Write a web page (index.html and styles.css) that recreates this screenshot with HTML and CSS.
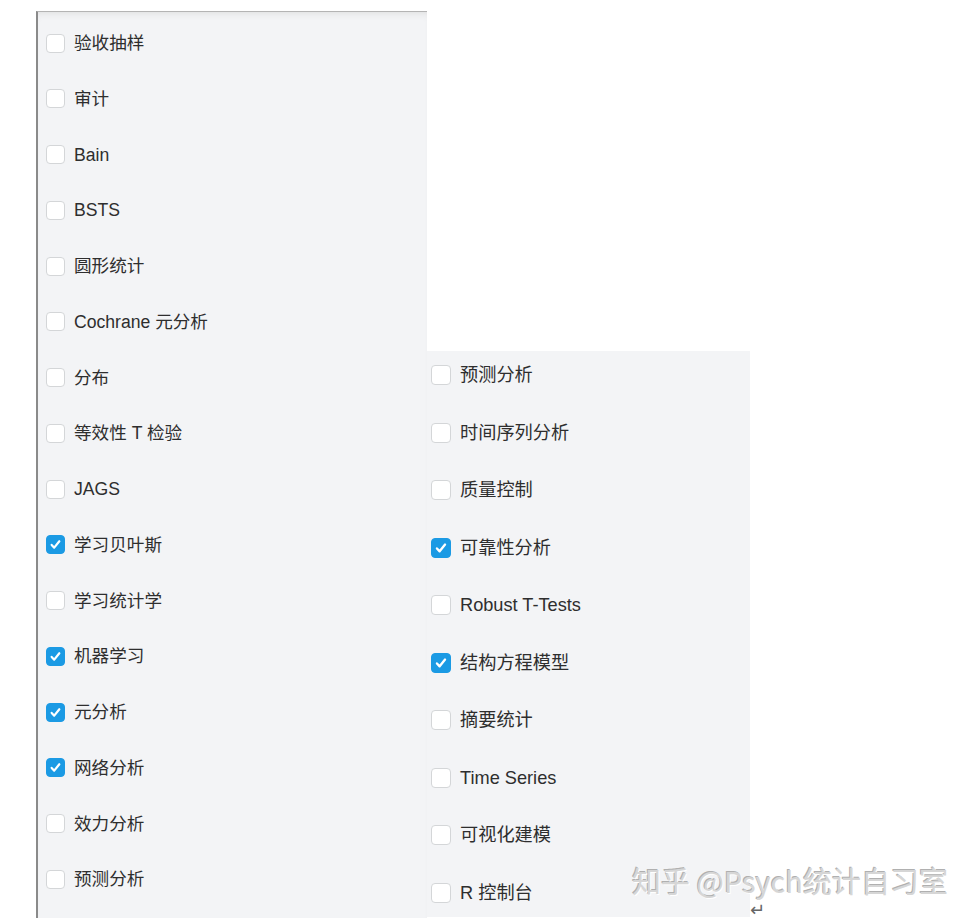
FILE: index.html
```html
<!DOCTYPE html>
<html lang="zh-CN">
<head>
  <meta charset="UTF-8">
  <title>模块列表</title>
  <link rel="stylesheet" href="styles.css">
</head>
<body>

<div class="page">

  <div class="panel panel-left">
    <label class="item"><span class="box"></span>验收抽样</label>
    <label class="item"><span class="box"></span>审计</label>
    <label class="item"><span class="box"></span>Bain</label>
    <label class="item"><span class="box"></span>BSTS</label>
    <label class="item"><span class="box"></span>圆形统计</label>
    <label class="item"><span class="box"></span>Cochrane 元分析</label>
    <label class="item"><span class="box"></span>分布</label>
    <label class="item"><span class="box"></span>等效性 T 检验</label>
    <label class="item"><span class="box"></span>JAGS</label>
    <label class="item"><span class="box checked"><svg viewBox="0 0 20 20"><path d="M5.5 10.5l3 3.2 6-7.5"/></svg></span>学习贝叶斯</label>
    <label class="item"><span class="box"></span>学习统计学</label>
    <label class="item"><span class="box checked"><svg viewBox="0 0 20 20"><path d="M5.5 10.5l3 3.2 6-7.5"/></svg></span>机器学习</label>
    <label class="item"><span class="box checked"><svg viewBox="0 0 20 20"><path d="M5.5 10.5l3 3.2 6-7.5"/></svg></span>元分析</label>
    <label class="item"><span class="box checked"><svg viewBox="0 0 20 20"><path d="M5.5 10.5l3 3.2 6-7.5"/></svg></span>网络分析</label>
    <label class="item"><span class="box"></span>效力分析</label>
    <label class="item"><span class="box"></span>预测分析</label>
  </div>

  <div class="panel panel-right">
    <label class="item"><span class="box"></span>预测分析</label>
    <label class="item"><span class="box"></span>时间序列分析</label>
    <label class="item"><span class="box"></span>质量控制</label>
    <label class="item"><span class="box checked"><svg viewBox="0 0 20 20"><path d="M5.5 10.5l3 3.2 6-7.5"/></svg></span>可靠性分析</label>
    <label class="item"><span class="box"></span>Robust T-Tests</label>
    <label class="item"><span class="box checked"><svg viewBox="0 0 20 20"><path d="M5.5 10.5l3 3.2 6-7.5"/></svg></span>结构方程模型</label>
    <label class="item"><span class="box"></span>摘要统计</label>
    <label class="item"><span class="box"></span>Time Series</label>
    <label class="item"><span class="box"></span>可视化建模</label>
    <label class="item"><span class="box"></span>R 控制台</label>
  </div>

  <div class="return-mark">↵</div>
  <div class="watermark">知乎 @Psych统计自习室</div>

</div>

</body>
</html>
```

FILE: styles.css
```css
body {
  margin: 0;
  background: #ffffff;
  font-family: "Liberation Sans", "Noto Sans CJK SC", sans-serif;
  color: #2e2e2e;
}
.page {
  position: relative;
  width: 970px;
  height: 924px;
  display: flex;
  align-items: flex-start;
  padding: 11px 0 0 36px;
  box-sizing: border-box;
}
.panel {
  background: #f3f4f6;
  display: flex;
  flex-direction: column;
  overflow: hidden;
}
.panel-left {
  width: 391px;
  height: 907px;
  border-left: 2px solid #8a8a8a;
  border-top: 1px solid #b4b4b4;
  box-shadow: inset 0 6px 8px -6px #d8d8d8;
  padding: 20px 0 0 8px;
  box-sizing: border-box;
  font-size: 17.6px;
}
.panel-right {
  width: 323px;
  height: 566px;
  margin-top: 340px;
  padding: 13px 0 0 4px;
  box-sizing: border-box;
  font-size: 18.2px;
}
.item {
  display: flex;
  align-items: center;
  height: 22px;
  line-height: 22px;
  white-space: nowrap;
}
.panel-left .item {
  margin-bottom: 33.75px;
}
.panel-right .item {
  margin-bottom: 35.5px;
}
.box {
  flex: none;
  width: 19px;
  height: 19px;
  margin-right: 9px;
  border: 1px solid #d4d6d8;
  border-radius: 4px;
  background: #ffffff;
  box-sizing: border-box;
  display: flex;
}
.panel-right .box {
  width: 20px;
  height: 20px;
}
.box.checked {
  background: #1b9ae4;
  border-color: #1b9ae4;
}
.box svg {
  width: 100%;
  height: 100%;
}
.box svg path {
  fill: none;
  stroke: #ffffff;
  stroke-width: 2.6;
  stroke-linecap: round;
  stroke-linejoin: round;
}
.watermark {
  position: absolute;
  left: 632px;
  top: 865px;
  font-family: "Noto Sans CJK SC", sans-serif;
  font-size: 29px;
  line-height: 30px;
  color: #d6d6d6;
  text-shadow: 1px 1px 0 #ffffff, -1px -1px 0 #b0b0b0;
  white-space: nowrap;
}
.return-mark {
  position: absolute;
  left: 750px;
  top: 900px;
  font-size: 18px;
  line-height: 20px;
  color: #666666;
  font-family: "DejaVu Sans", sans-serif;
}
```
